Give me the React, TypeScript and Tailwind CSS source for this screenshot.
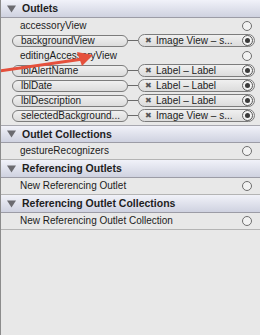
import React from "react";

// outlet rows in the connections inspector
const outlets = [
  { name: "accessoryView" },
  { name: "backgroundView", target: "Image View – s..." },
  { name: "editingAccessoryView" },
  { name: "lblAlertName", target: "Label – Label" },
  { name: "lblDate", target: "Label – Label" },
  { name: "lblDescription", target: "Label – Label" },
  { name: "selectedBackground...", target: "Image View – s..." },
];

function Triangle() {
  return (
    <svg width="9" height="8" viewBox="0 0 9 8" className="shrink-0">
      <path d="M0 0.5 L9 0.5 L4.5 7.5 Z" fill="#6b6b70" />
    </svg>
  );
}

function EmptyDot() {
  return <div className="w-[10px] h-[10px] rounded-full border border-[#6e6e6e] bg-[#f2f2f2] shrink-0" />;
}

function FilledDot() {
  return (
    <div className="w-[11px] h-[11px] rounded-full border border-[#5a5a5a] bg-[#f4f4f4] flex items-center justify-center shrink-0">
      <div className="w-[5px] h-[5px] rounded-full bg-[#3a3a3a]" />
    </div>
  );
}

function Header({ title, top = true }: { title: string; top?: boolean }) {
  return (
    <div
      className={`h-[18px] flex items-center gap-[6px] pl-[6px] border-b border-[#9c9ca6] bg-gradient-to-b from-[#f1f2f9] to-[#cfd2e0] ${
        top ? "border-t border-t-[#a8a8b0]" : ""
      }`}
    >
      <Triangle />
      <span className="text-[10.5px] font-bold text-[#1e1e1e] leading-none">{title}</span>
    </div>
  );
}

function SimpleRow({ name }: { name: string }) {
  return (
    <div className="h-[17px] flex items-center justify-between pl-[19px] pr-[8px] border-b border-[#b4b4b4]">
      <span className="text-[10px] text-[#1c1c1c] leading-none">{name}</span>
      <EmptyDot />
    </div>
  );
}

export default function App() {
  return (
    <div className="relative w-[260px] h-[335px] overflow-hidden bg-[#e8e8e8] border-l border-[#8c8c8c] font-['Liberation_Sans',Arial,sans-serif]">
      {/* Outlets */}
      <div className="h-[18px] flex items-center gap-[6px] pl-[6px] border-b border-[#9c9ca6] bg-gradient-to-b from-[#f1f2f9] to-[#cfd2e0]">
        <Triangle />
        <span className="text-[10.5px] font-bold text-[#1e1e1e] leading-none">Outlets</span>
      </div>
      <div className="pb-[2px]">
        {outlets.map((o) =>
          o.target ? (
            <div key={o.name} className="h-[15px] flex items-center pl-[11px]">
              <div className="w-[116px] h-[12px] rounded-full border border-[#7c7c7c] bg-gradient-to-b from-[#f0f0f0] to-[#dcdcdc] flex items-center pl-[8px]">
                <span className="text-[10px] text-[#1c1c1c] leading-none">{o.name}</span>
              </div>
              <div className="w-[10px] h-px bg-[#6a6a6a]" />
              <div className="w-[117px] h-[13px] rounded-full border border-[#7c7c7c] bg-gradient-to-b from-[#f0f0f0] to-[#dcdcdc] flex items-center pl-[6px] pr-[1px]">
                <span className="text-[8px] text-[#555] leading-none mr-[4px]">✖</span>
                <span className="text-[10px] text-[#1c1c1c] leading-none flex-1">{o.target}</span>
                <FilledDot />
              </div>
            </div>
          ) : (
            <div key={o.name} className="h-[15px] flex items-center justify-between pl-[19px] pr-[8px]">
              <span className="text-[10px] text-[#1c1c1c] leading-none">{o.name}</span>
              <EmptyDot />
            </div>
          )
        )}
      </div>

      <Header title="Outlet Collections" />
      <SimpleRow name="gestureRecognizers" />
      <Header title="Referencing Outlets" top={false} />
      <SimpleRow name="New Referencing Outlet" />
      <Header title="Referencing Outlet Collections" top={false} />
      <SimpleRow name="New Referencing Outlet Collection" />

      {/* red annotation arrow */}
      <svg className="absolute left-0 top-0 pointer-events-none" width="260" height="335">
        <line x1="-2" y1="71" x2="82" y2="59" stroke="#e5503c" strokeWidth="3" strokeLinecap="round" />
        <polygon points="92,55 76,52 81,66" fill="#e5503c" />
      </svg>
    </div>
  );
}
